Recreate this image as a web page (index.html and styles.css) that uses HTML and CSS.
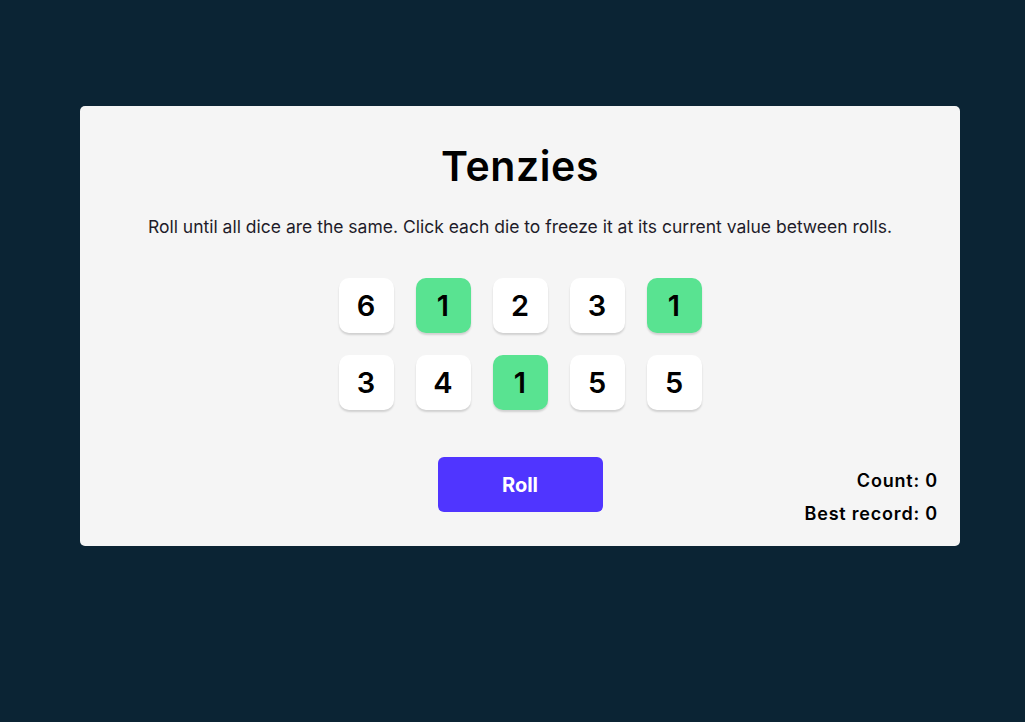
FILE: index.html
```html
<!DOCTYPE html>
<html lang="en">
<head>
<meta charset="utf-8">
<title>Tenzies</title>
<link rel="stylesheet" href="styles.css">
</head>
<body>
<main class="card">
  <h1 class="title">Tenzies</h1>
  <p class="instructions">Roll until all dice are the same. Click each die to freeze it at its current value between rolls.</p>
  <div class="dice">
    <button class="die">6</button>
    <button class="die held">1</button>
    <button class="die">2</button>
    <button class="die">3</button>
    <button class="die held">1</button>
    <button class="die">3</button>
    <button class="die">4</button>
    <button class="die held">1</button>
    <button class="die">5</button>
    <button class="die">5</button>
  </div>
  <div class="footer">
    <span class="spacer"></span>
    <button class="roll">Roll</button>
    <div class="stats">
      <div class="stat">Count: 0</div>
      <div class="stat">Best record: 0</div>
    </div>
  </div>
</main>
</body>
</html>
```

FILE: styles.css
```css
html, body {
  margin: 0;
  padding: 0;
}

body {
  background: #0B2434;
  min-height: 722px;
  font-family: Inter, "Noto Sans", sans-serif;
}

.card {
  box-sizing: border-box;
  width: 880px;
  margin: 106px 0 0 80px;
  background: #F5F5F5;
  border-radius: 5px;
  padding: 35px 22px 16px;
  display: flex;
  flex-direction: column;
  align-items: center;
}

.title {
  margin: 0;
  font-size: 41px;
  line-height: 50px;
  font-weight: 600;
  letter-spacing: 0.6px;
  color: #000;
}

.instructions {
  margin: 26px 0 0;
  font-size: 17.5px;
  line-height: 20px;
  color: #1E1C2A;
  text-align: center;
}

.dice {
  margin-top: 41px;
  display: grid;
  grid-template-columns: repeat(5, 55px);
  grid-auto-rows: 55px;
  gap: 22px;
}

.die {
  border: none;
  padding: 0;
  background: #FFFFFF;
  border-radius: 10px;
  box-shadow: 0 2px 2px rgba(0, 0, 0, 0.15);
  font-family: Inter, "Noto Sans", sans-serif;
  font-size: 29px;
  font-weight: 600;
  color: #000;
  display: flex;
  align-items: center;
  justify-content: center;
}

.die.held {
  background: #59E391;
}

.footer {
  margin-top: 47px;
  width: 100%;
  display: grid;
  grid-template-columns: 1fr auto 1fr;
  align-items: start;
}

.roll {
  width: 165px;
  height: 55px;
  border: none;
  border-radius: 6px;
  background: #5035FF;
  color: #FFFFFF;
  font-family: Inter, "Noto Sans", sans-serif;
  font-size: 20px;
  font-weight: 700;
}

.stats {
  justify-self: end;
  margin-top: 7px;
  text-align: right;
}

.stat {
  font-size: 18px;
  line-height: 33px;
  font-weight: 600;
  letter-spacing: 0.8px;
  color: #000;
}
```
